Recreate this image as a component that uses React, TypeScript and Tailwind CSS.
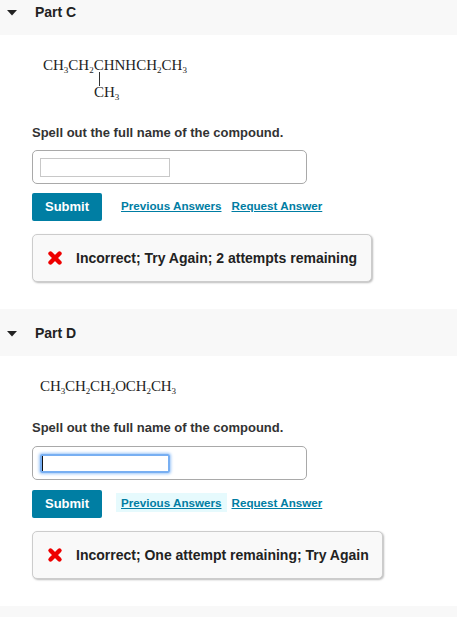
import React from 'react'

const sans = { fontFamily: '"Liberation Sans", Arial, sans-serif' }

function Sub({ children }: { children: React.ReactNode }) {
  return <sub className="text-[9px] leading-none align-baseline relative top-[3px]">{children}</sub>
}

function PartHeader({ label }: { label: string }) {
  return (
    <div className="h-[47px] bg-[#f8f8f8] flex items-center">
      <svg width="14" height="8" viewBox="0 0 14 8" className="ml-[5px] mr-[16px] mt-[2px]">
        <path d="M2 1h10L7 6.5z" fill="#222" />
      </svg>
      <span className="text-[14px] font-bold text-[#222] mt-[2px]">{label}</span>
    </div>
  )
}

function Answer({ focused }: { focused?: boolean }) {
  return (
    <div className="ml-[32px] w-[275px] h-[34px] rounded-[5px] border border-[#a9a9a9] bg-white flex items-center pl-[7px]">
      {focused ? (
        <div className="w-[130px] h-[19px] border-2 border-[#78aff2] rounded-[2px] shadow-[0_0_3px_1px_#9cc6f8] flex items-center">
          <div className="w-[1px] h-[15px] bg-[#111]" />
        </div>
      ) : (
        <div className="w-[130px] h-[19px] border border-[#c8c8c8]" />
      )}
    </div>
  )
}

function Actions({ highlight }: { highlight?: boolean }) {
  return (
    <div className="ml-[32px] flex items-center h-[28px]">
      <button className="w-[70px] h-[28px] rounded-[2px] bg-[#007ea3] text-white text-[13px] font-bold">Submit</button>
      <a className={`ml-[14px] -mt-[3px] px-[5px] py-[1px] text-[11.65px] font-bold text-[#007da3] underline ${highlight ? 'bg-[#e6fafd]' : ''}`}>
        Previous Answers
      </a>
      <a className="ml-[5px] -mt-[3px] text-[11.65px] font-bold text-[#007da3] underline">Request Answer</a>
    </div>
  )
}

function Feedback({ text, width }: { text: string; width: string }) {
  return (
    <div className={`ml-[32px] h-[48px] ${width} rounded-[5px] border border-[#cccccc] bg-[#f9f9f9] shadow-[1px_1px_2px_#bbbbbb] flex items-center pl-[14px]`}>
      <svg width="16" height="16" viewBox="0 0 16 16">
        <path d="M3.5 3.5l9 9M12.5 3.5l-9 9" stroke="#ee0000" strokeWidth="4.4" strokeLinecap="round" />
      </svg>
      <span className="ml-[13px] mt-[1px] text-[14px] font-bold text-[#222] whitespace-nowrap">{text}</span>
    </div>
  )
}

export default function App() {
  return (
    <div className="w-[457px] h-[617px] bg-white overflow-hidden" style={sans}>
      <div className="-mt-[12px]">
        <PartHeader label="Part C" />
      </div>

      <div className="relative ml-[43px] mt-[20px] h-[50px] text-[15px] leading-[20px] text-[#222]" style={{ fontFamily: '"Liberation Serif", serif' }}>
        <div>CH<Sub>3</Sub>CH<Sub>2</Sub>CHNHCH<Sub>2</Sub>CH<Sub>3</Sub></div>
        <div className="absolute left-[56px] top-[17px] w-[1px] h-[14px] bg-[#333]" />
        <div className="ml-[51px] mt-[7px]">CH<Sub>3</Sub></div>
      </div>

      <p className="ml-[32px] mt-[18px] text-[13px] leading-[20px] font-bold text-[#333]">Spell out the full name of the compound.</p>
      <div className="mt-[7px]"><Answer /></div>
      <div className="mt-[9px]"><Actions /></div>
      <div className="mt-[13px]"><Feedback text="Incorrect; Try Again; 2 attempts remaining" width="w-[340px]" /></div>

      <div className="mt-[27px]"><PartHeader label="Part D" /></div>

      <div className="ml-[40px] mt-[20px] text-[15px] tracking-[-0.1px] leading-[20px] text-[#222]" style={{ fontFamily: '"Liberation Serif", serif' }}>
        CH<Sub>3</Sub>CH<Sub>2</Sub>CH<Sub>2</Sub>OCH<Sub>2</Sub>CH<Sub>3</Sub>
      </div>

      <p className="ml-[32px] mt-[22px] text-[13px] leading-[20px] font-bold text-[#333]">Spell out the full name of the compound.</p>
      <div className="mt-[8px]"><Answer focused /></div>
      <div className="mt-[10px]"><Actions highlight /></div>
      <div className="mt-[13px]"><Feedback text="Incorrect; One attempt remaining; Try Again" width="w-[351px]" /></div>

      <div className="mt-[27px] h-[20px] bg-[#f8f8f8]" />
    </div>
  )
}
